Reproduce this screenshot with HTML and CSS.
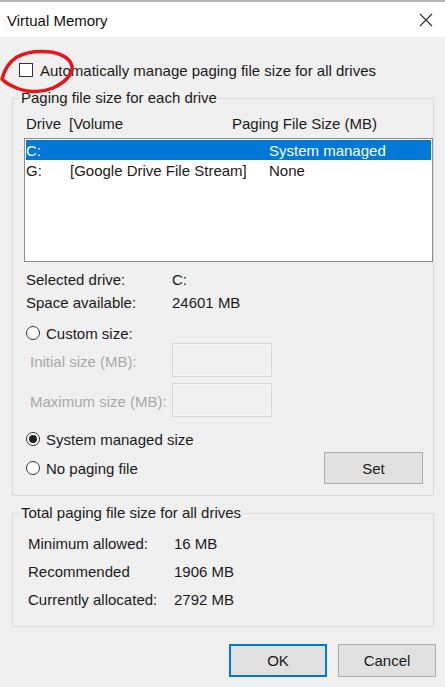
FILE: index.html
```html
<!DOCTYPE html>
<html lang="en">
<head>
    <meta charset="UTF-8">
    <meta name="viewport" content="width=device-width, initial-scale=1.0">
    <title>Virtual Memory</title>
    <link rel="stylesheet" href="styles.css">
</head>
<body>
<div class="window">
    <div class="titlebar">
        <span class="title">Virtual Memory</span>
        <svg class="close" width="14" height="14" viewBox="0 0 14 14">
            <path d="M1 1 L13 13 M13 1 L1 13" stroke="#333" stroke-width="1.2" fill="none"/>
        </svg>
    </div>

    <div class="content">
        <div class="auto-row">
            <span class="checkbox"></span>
            <span>Automatically manage paging file size for all drives</span>
            <!-- red hand drawn mark around the checkbox -->
            <svg class="scribble" width="80" height="50" viewBox="0 0 80 50">
                <path d="M2 30 C4 22 9 13 17 8 C26 3 40 2 51 3 C62 5 70 10 72 17 C73 26 64 34 53 39 C43 43 29 44 19 40 C11 37 6 34 3 31"
                      stroke="#e8141c" stroke-width="3.5" fill="none" stroke-linecap="round"/>
            </svg>
        </div>

        <fieldset class="group">
            <legend>Paging file size for each drive</legend>
            <div class="list-head">
                <span>Drive</span>
                <span>[Volume</span>
                <span>Paging File Size (MB)</span>
            </div>
            <div class="listbox">
                <div class="list-row selected">
                    <span>C:</span>
                    <span></span>
                    <span>System managed</span>
                </div>
                <div class="list-row">
                    <span>G:</span>
                    <span>[Google Drive File Stream]</span>
                    <span>None</span>
                </div>
            </div>

            <div class="info">
                <div class="info-row"><span class="lbl">Selected drive:</span><span>C:</span></div>
                <div class="info-row"><span class="lbl">Space available:</span><span>24601 MB</span></div>
            </div>

            <div class="radio-row custom">
                <span class="radio"></span>
                <span>Custom size:</span>
            </div>
            <div class="size-row first">
                <span class="disabled">Initial size (MB):</span>
                <span class="textbox"></span>
            </div>
            <div class="size-row">
                <span class="disabled">Maximum size (MB):</span>
                <span class="textbox"></span>
            </div>
            <div class="radio-row managed">
                <span class="radio checked"></span>
                <span>System managed size</span>
            </div>
            <div class="last-row">
                <div class="radio-row">
                    <span class="radio"></span>
                    <span>No paging file</span>
                </div>
                <button class="btn set">Set</button>
            </div>
        </fieldset>

        <fieldset class="group total">
            <legend>Total paging file size for all drives</legend>
            <div class="total-row"><span class="lbl">Minimum allowed:</span><span>16 MB</span></div>
            <div class="total-row"><span class="lbl">Recommended</span><span>1906 MB</span></div>
            <div class="total-row"><span class="lbl">Currently allocated:</span><span>2792 MB</span></div>
        </fieldset>

        <div class="actions">
            <button class="btn ok">OK</button>
            <button class="btn">Cancel</button>
        </div>
    </div>
</div>
</body>
</html>
```

FILE: styles.css
```css
*{
    margin:0;
    padding:0;
    box-sizing: border-box;
}
body{
    background-color: #f0f0f0;
    font-family: "Liberation Sans", Arial, sans-serif;
    font-size: 15px;
    color: #1a1a1a;
}
.window{
    width: 445px;
    height: 687px;
    background-color: #f0f0f0;
}
.titlebar{
    height: 37px;
    background-color: white;
    border-top: 2px solid #b4b4b4;
    display: flex;
    align-items: center;
    justify-content: space-between;
    padding: 1px 12px 0 7px;
}
.title{
    color: #111;
}
.content{
    padding-top: 23px;
}
.auto-row{
    position: relative;
    height: 20px;
    display: flex;
    align-items: center;
    padding-left: 19px;
}
.checkbox{
    width: 14px;
    height: 14px;
    border: 1px solid #333;
    background-color: white;
    margin-right: 7px;
}
.scribble{
    position: absolute;
    left: 0;
    top: -11px;
    z-index: 5;
    overflow: visible;
}
.group{
    margin: 9px 0 0 12px;
    width: 422px;
    border: 1px solid #dcdcdc;
    padding: 0 0 11px 0;
}
.group legend{
    margin-left: 6px;
    padding: 0 2px;
    line-height: 18px;
}
.list-head{
    margin-top: 7px;
    height: 18px;
    display: grid;
    grid-template-columns: 43px 163px 1fr;
    align-items: center;
    padding-left: 13px;
}
.listbox{
    margin: 6px 0 0 11px;
    width: 409px;
    height: 124px;
    border: 1px solid #8c8c8c;
    background-color: white;
    padding: 1px;
}
.list-row{
    height: 20px;
    display: grid;
    grid-template-columns: 44px 199px 1fr;
    align-items: center;
    padding-left: 0;
}
.list-row.selected{
    background-color: #0078d7;
    color: white;
}
.info{
    margin-top: 6px;
}
.info-row{
    height: 23px;
    display: flex;
    align-items: center;
    padding-left: 13px;
}
.info-row .lbl{
    width: 146px;
}
.radio-row{
    height: 20px;
    display: flex;
    align-items: center;
    padding-left: 13px;
}
.radio{
    width: 14px;
    height: 14px;
    border: 1px solid #333;
    border-radius: 50%;
    background-color: white;
    margin-right: 6px;
    display: flex;
    align-items: center;
    justify-content: center;
}
.radio.checked::after{
    content: "";
    width: 8px;
    height: 8px;
    border-radius: 50%;
    background-color: #222;
}
.radio-row.custom{
    margin-top: 9px;
}
.size-row{
    height: 34px;
    display: flex;
    align-items: center;
    padding-left: 17px;
    margin-top: 6px;
}
.size-row.first{
    margin-top: 0;
}
.disabled{
    width: 142px;
    color: #a8a8a8;
    padding-top: 3px;
}
.textbox{
    width: 100px;
    height: 34px;
    border: 1px solid #d6d6d6;
    box-shadow: inset 0 0 0 1px #f7f7f7;
    background-color: #f0f0f0;
}
.radio-row.managed{
    margin-top: 12px;
}
.last-row{
    margin-top: 3px;
    height: 32px;
    display: flex;
    align-items: center;
    justify-content: space-between;
    padding-right: 10px;
}
.btn{
    font-family: "Liberation Sans", Arial, sans-serif;
    font-size: 15px;
    color: #1a1a1a;
    background-color: #e1e1e1;
    border: 1px solid #adadad;
    height: 33px;
    width: 98px;
}
.btn.set{
    width: 99px;
    height: 32px;
}
.btn.ok{
    border: 2px solid #0078d7;
}
.group.total{
    margin-top: 8px;
    padding-bottom: 13px;
}
.total-row{
    height: 28px;
    display: flex;
    align-items: center;
    padding-left: 15px;
}
.total-row:first-of-type{
    margin-top: 7px;
}
.total-row .lbl{
    width: 146px;
}
.actions{
    margin-top: 17px;
    display: flex;
    justify-content: flex-end;
    gap: 11px;
    padding-right: 9px;
}
```
